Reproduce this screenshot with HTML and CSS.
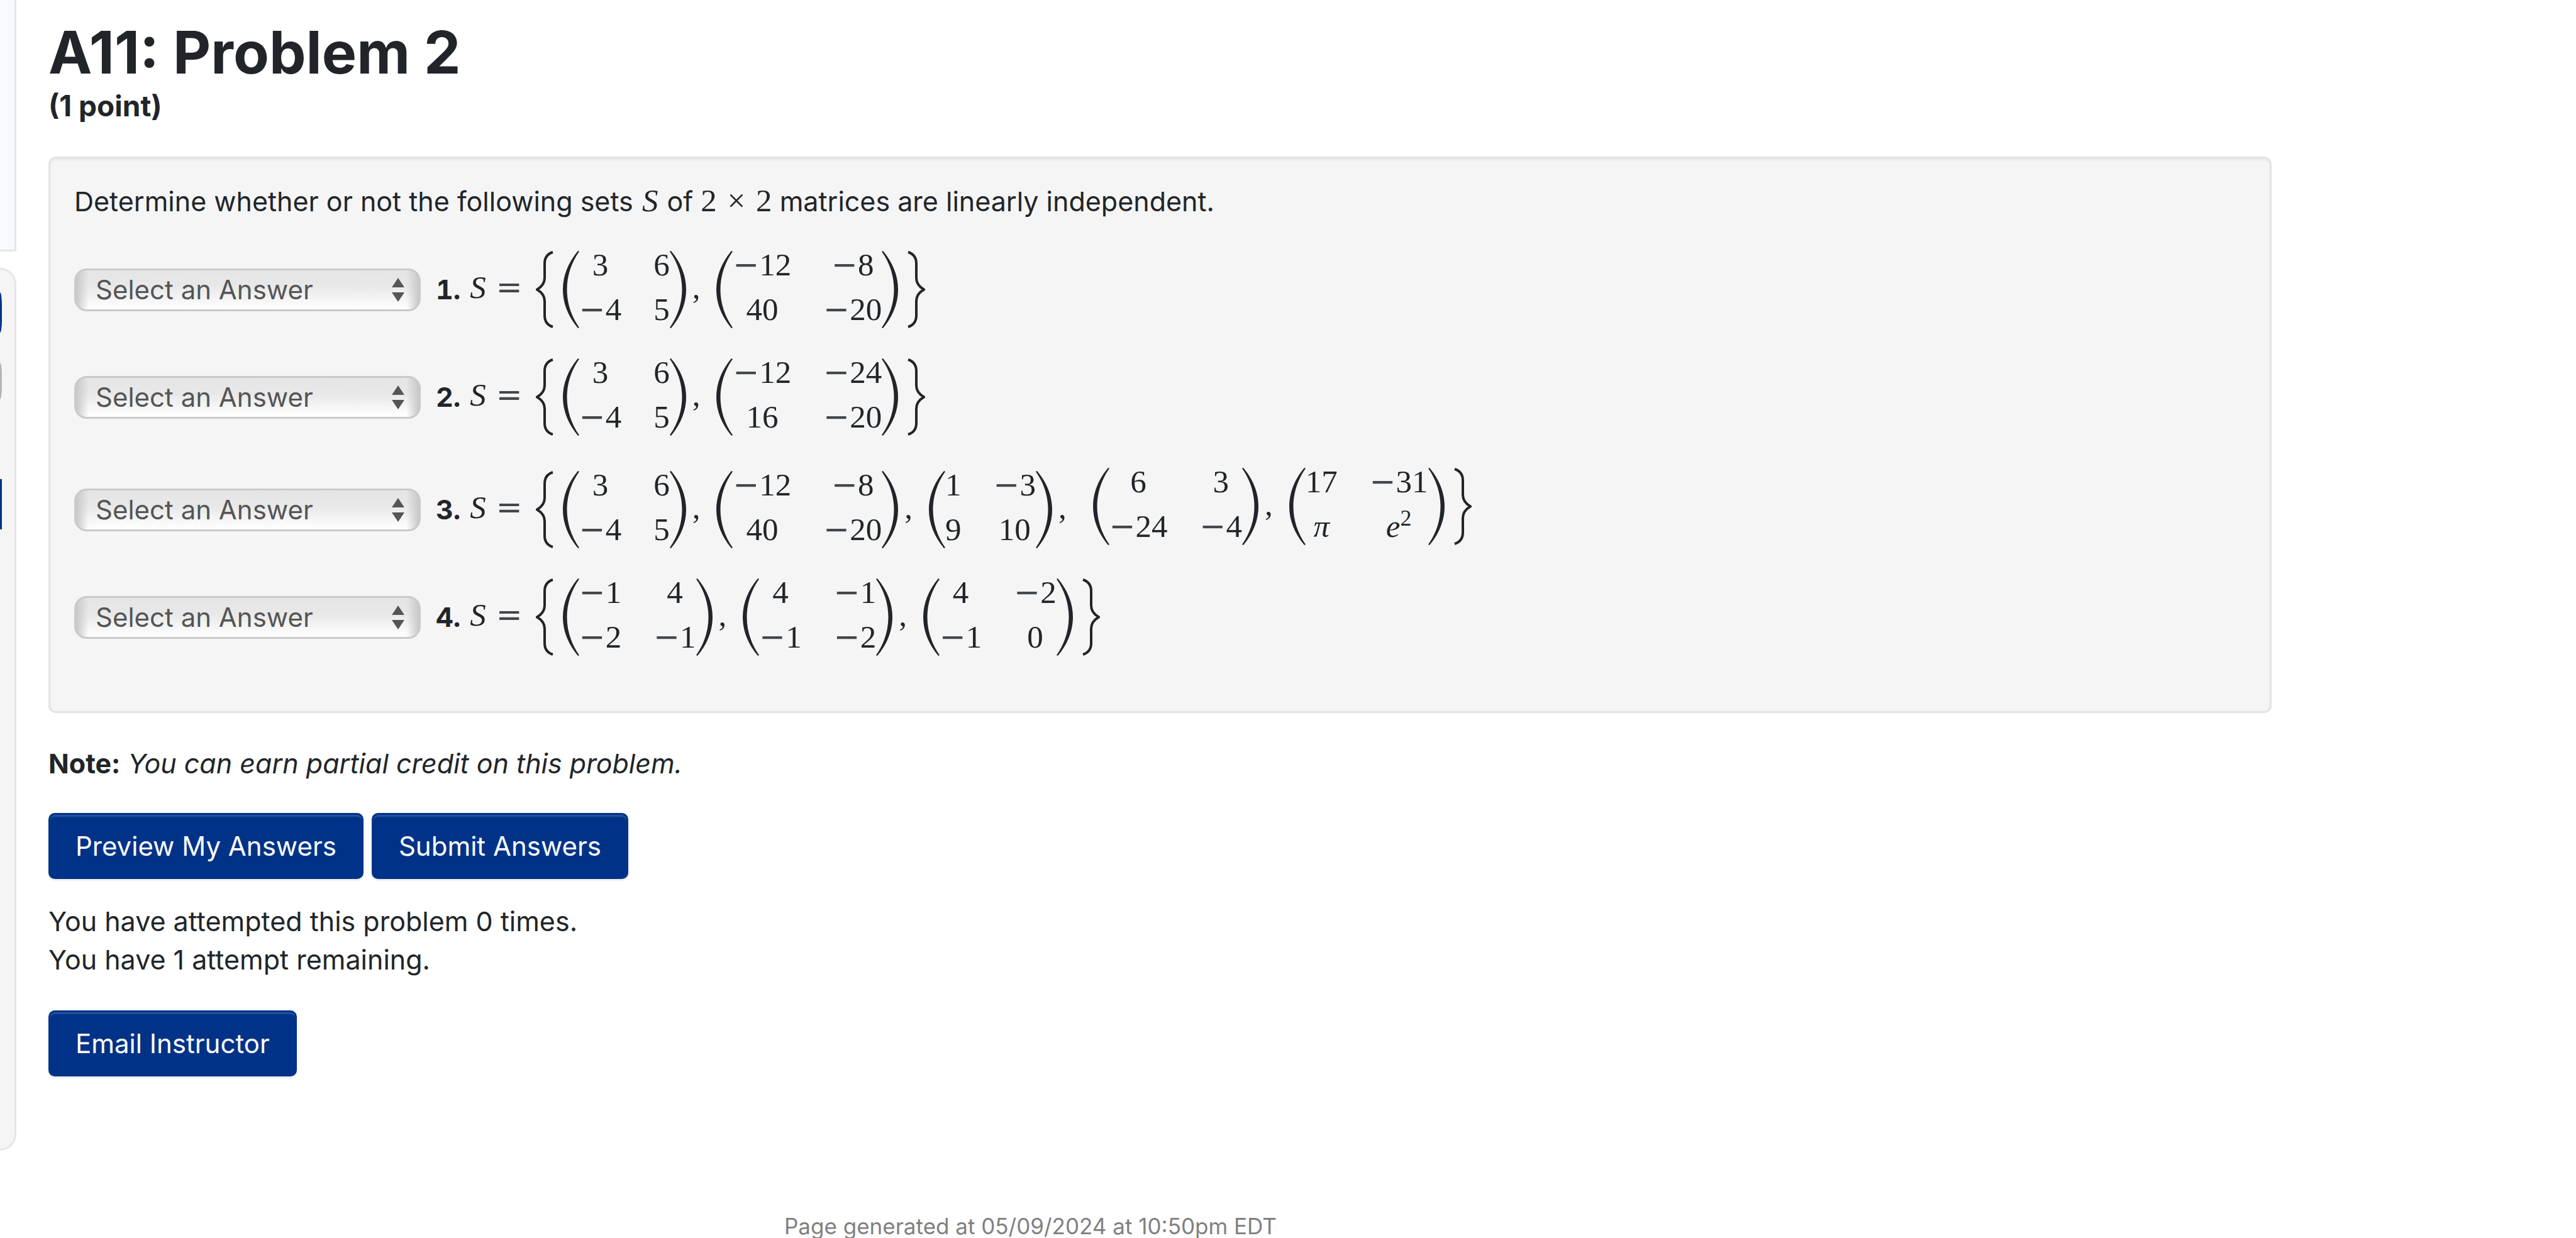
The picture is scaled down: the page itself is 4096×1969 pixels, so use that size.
FILE: index.html
```html
<!DOCTYPE html>
<html lang="en">
<head>
  <meta charset="UTF-8" />
  <meta name="viewport" content="width=device-width, initial-scale=1" />
  <title>A11: Problem 2</title>
  <link rel="stylesheet" href="styles.css">
</head>
<body>

  <!-- stretched delimiters shared by all the matrices -->
  <svg class="defs" aria-hidden="true">
    <symbol id="paren" viewBox="0 0 26 123">
      <path d="M24 0 L26 1 C0 38 0 85 26 122 L24 123 C-8 85 -8 38 24 0 Z" />
    </symbol>
    <symbol id="brace" viewBox="0 0 28 123">
      <path d="M27 2 C18 5 14 11 14 20 V43 C14 52 8 58 2 61.5 C8 65 14 71 14 80 V103 C14 112 18 118 27 121" fill="none" stroke="currentColor" stroke-width="4" />
    </symbol>
  </svg>

  <div class="page">
    <aside class="sidebar">
      <div class="site-nav"></div>
      <div class="info-box">
        <span class="pill"></span>
        <span class="pill grey"></span>
        <span class="current"></span>
      </div>
    </aside>

    <main>
      <h1>A11: Problem 2</h1>
      <h2>(1 point)</h2>

      <form id="problemForm" onsubmit="return false;">
        <div class="problem">
          <p>Determine whether or not the following sets <i class="tex set-name">S</i> of <span class="tex">2 <span class="times">×</span> 2</span> matrices are linearly independent.</p>
          <div id="questions"></div>
        </div>

        <p class="note"><b>Note:</b> <i>You can earn partial credit on this problem.</i></p>

        <div class="buttons">
          <button id="preview" type="submit">Preview My Answers</button>
          <button id="submit" type="submit">Submit Answers</button>
        </div>
      </form>

      <p class="attempts">You have attempted this problem 0 times.<br>You have 1 attempt remaining.</p>

      <button id="email" type="button">Email Instructor</button>
    </main>
  </div>

  <footer>Page generated at 05/09/2024 at 10:50pm EDT</footer>

  <script src="script.js"></script>
</body>
</html>
```

FILE: styles.css
```css
* {
  box-sizing: border-box;
}
html {
  overflow: hidden;
}
body {
  margin: 0;
  background: #fff;
  color: #212529;
  font-family: Inter, sans-serif;
  font-size: 43px;
  line-height: 61px;
}
.defs {
  position: absolute;
  width: 0;
  height: 0;
}
.page {
  display: grid;
  grid-template-columns: 26px 1fr;
  column-gap: 51px;
  padding-right: 484px;
}

/* left edge */
.sidebar {
  display: flex;
  flex-direction: column;
  gap: 26px;
}
.site-nav {
  height: 400px;
  background: #f8fafd;
  border: solid #e6e6e6;
  border-width: 0 3px 3px 0;
}
.info-box {
  height: 1404px;
  padding-top: 36px;
  background: #f5f5f5;
  border: 3px solid #e6e6e6;
  border-left: none;
  border-radius: 0 27px 27px 0;
}
.info-box span {
  display: block;
  width: 3px;
}
.info-box .pill {
  height: 64px;
  margin-bottom: 48px;
  background: #003388;
  border-radius: 0 3px 3px 0 / 0 20px 20px 0;
}
.info-box .grey {
  height: 58px;
  margin-bottom: 127px;
  background: #b5b5b5;
}
.info-box .current {
  height: 80px;
  background: #003388;
}

h1 {
  margin: 24px 0 0;
  font-size: 93px;
  line-height: 118px;
  font-weight: 700;
}
h2 {
  margin: 0 0 55px;
  font-size: 46px;
  line-height: 52px;
  font-weight: 700;
}
p {
  margin: 0;
}
.problem {
  padding: 38px 38px 64px;
  background: #f5f5f5;
  border: 3px solid #e3e3e3;
  border-radius: 12px;
  box-shadow: inset 0 3px 3px rgba(0, 0, 0, 0.05);
}
.problem > p {
  margin-bottom: 24px;
}

/* questions */
.question {
  display: flex;
  align-items: center;
  height: 171px;
}
.question.long {
  margin-top: 8px;
}
select {
  appearance: none;
  width: 551px;
  height: 68px;
  margin: 0 24px 0 0;
  padding: 0 31px;
  border: 3px solid #cacaca;
  border-radius: 20px;
  background:
    url("data:image/svg+xml,%3Csvg xmlns='http://www.w3.org/2000/svg' viewBox='0 0 20 38'%3E%3Cpath d='M10 0L20 15H0zM0 23H20L10 38z' fill='%23555'/%3E%3C/svg%3E") no-repeat right 23px center / 20px 38px,
    linear-gradient(90deg, #c8c8c8, rgba(200, 200, 200, 0) 20px, rgba(200, 200, 200, 0) calc(100% - 20px), #c8c8c8),
    linear-gradient(#e5e5e5, #e8e8e8 40%, #fff);
  color: #555;
  font-family: inherit;
  font-size: 42px;
}
.question label {
  font-weight: 700;
  font-variant-numeric: tabular-nums;
}
.tex {
  font-family: "Liberation Serif", serif;
  font-size: 51px;
  line-height: 1px;
}
.set-name {
  margin: 0 2px;
}
.times {
  margin: 0 4px;
}
.op {
  color: #43474b;
  font-family: "DejaVu Sans", sans-serif;
  font-size: 50px;
  line-height: 1px;
}
.math {
  display: flex;
  align-items: center;
  margin-left: 15px;
}
.group {
  display: flex;
  align-items: center;
}
.raised {
  margin-left: 16px;
  padding-bottom: 10px;
}
.sym {
  padding-bottom: 6px;
}
.equals {
  margin: 0 21px 0 16px;
}
.comma {
  margin: 0 26px 0 10px;
}
.math svg {
  height: 123px;
  flex: none;
  fill: currentColor;
}
.paren {
  width: 26px;
}
.brace {
  width: 28px;
  margin-right: 15px;
}
.close {
  transform: scaleX(-1);
}
.brace.close {
  margin: 0 0 0 15px;
}
.matrix {
  display: grid;
  grid-template-columns: auto auto;
  column-gap: 51px;
  padding-bottom: 8px;
  line-height: 71px;
  text-align: center;
}
.matrix sup {
  font-size: 36px;
  line-height: 1px;
}

/* below the problem */
.note {
  margin-top: 50px;
}
.buttons {
  display: flex;
  gap: 13px;
  margin-top: 48px;
}
button {
  padding: 19px 40px;
  border: 3px solid #003388;
  border-radius: 10px;
  background: #003388;
  box-shadow: inset 0 3px 0 rgba(255, 255, 255, 0.15), 0 3px 3px rgba(0, 0, 0, 0.075);
  color: #fff;
  font-family: inherit;
  font-size: 42px;
  line-height: 61px;
  cursor: pointer;
}
.attempts {
  margin: 37px 0 50px;
}
footer {
  margin: 95px 20% 0 0;
  color: #808080;
  font-size: 35px;
  line-height: 51px;
  text-align: center;
}
```

FILE: script.js
```js
const questions = [
  [['3', '6', '-4', '5'], ['-12', '-8', '40', '-20']],
  [['3', '6', '-4', '5'], ['-12', '-24', '16', '-20']],
  [['3', '6', '-4', '5'], ['-12', '-8', '40', '-20'], ['1', '-3', '9', '10'], ['6', '3', '-24', '-4'], ['17', '-31', '<i>π</i>', '<i>e</i><sup>2</sup>']],
  [['-1', '4', '-2', '-1'], ['4', '-1', '-1', '-2'], ['4', '-2', '-1', '0']]
];

function delimiter(name, close) {
  return `<svg class="${name}${close ? ' close' : ''}" aria-hidden="true"><use href="#${name}"/></svg>`;
}

function matrix(cells) {
  const body = cells.map(c => `<span>${c.replace('-', '<span class="op">−</span>')}</span>`).join('');
  return delimiter('paren') + `<span class="matrix">${body}</span>` + delimiter('paren', true);
}

const comma = '<span class="sym comma">,</span>';

document.getElementById('questions').innerHTML = questions.map((set, i) => {
  // long sets break after the third matrix
  const first = set.slice(0, 3).map(matrix).join(comma);
  const rest = set.slice(3).map(matrix).join(comma);
  return `
    <div class="question${rest ? ' long' : ''}">
      <select id="answer${i + 1}">
        <option>Select an Answer</option>
        <option>Linearly Dependent</option>
        <option>Linearly Independent</option>
      </select>
      <label for="answer${i + 1}">${i + 1}.</label>
      <div class="math tex">
        <i class="sym">S</i><span class="sym equals op">=</span>${delimiter('brace')}
        <div class="group">${first}${rest ? comma : ''}</div>
        <div class="group${rest ? ' raised' : ''}">${rest}${delimiter('brace', true)}</div>
      </div>
    </div>`;
}).join('');
```
